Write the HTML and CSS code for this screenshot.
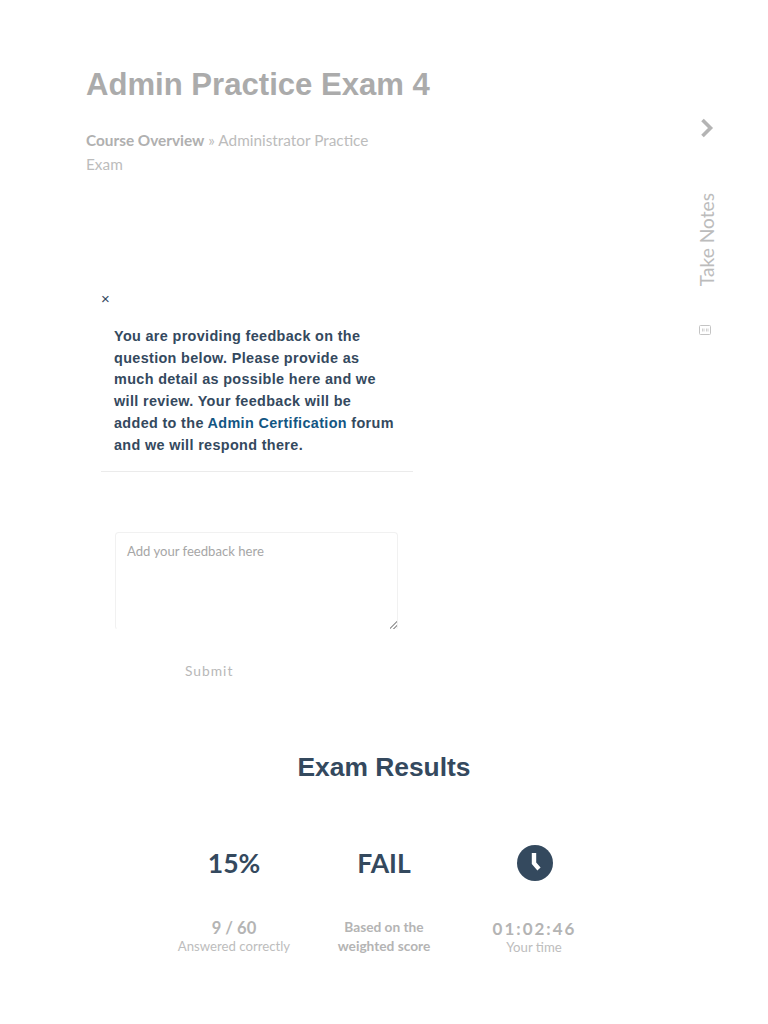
FILE: index.html
```html
<!DOCTYPE html>
<html lang="en">
<head>
<meta charset="utf-8">
<title>Admin Practice Exam 4</title>
<link rel="stylesheet" href="styles.css">
</head>
<body>
<div class="top">
  <main class="intro">
    <h1 class="title">Admin Practice Exam 4</h1>
    <p class="crumbs"><a class="crumb-link">Course Overview</a> » Administrator Practice Exam</p>
    <section class="feedback">
      <div class="close">×</div>
      <p class="notice">You are providing feedback on the question below. Please provide as much detail as possible here and we will review. Your feedback will be added to the <a class="forum">Admin Certification</a> forum and we will respond there.</p>
      <hr class="rule">
      <textarea class="area" placeholder="Add your feedback here"></textarea>
      <div class="submit">Submit</div>
    </section>
  </main>
  <aside class="side">
    <svg class="chevron" viewBox="0 0 14 20" width="14" height="20"><path d="M2.5 2 10.5 10 2.5 18" fill="none" stroke="#b4b4b4" stroke-width="3.6"/></svg>
    <div class="notes">Take Notes</div>
    <svg class="note-icon" viewBox="0 0 12 10" width="12" height="10"><rect x=".5" y=".5" width="11" height="9" rx="1" fill="none" stroke="#c4c4c4"/><path d="M3.5 3.5v3M5 3.5v3M7.5 3.5v3M9 3.5v3" stroke="#c4c4c4" stroke-width=".8"/></svg>
  </aside>
</div>
<section class="results">
  <h2 class="results-title">Exam Results</h2>
  <div class="stats">
    <div class="stat">
      <div class="big">15%</div>
      <div class="strong spaced">9 / 60</div>
      <div class="label">Answered correctly</div>
    </div>
    <div class="stat">
      <div class="big">FAIL</div>
      <div class="strong small">Based on the<br>weighted score</div>
    </div>
    <div class="stat">
      <div class="big"><svg class="clock" viewBox="0 0 36 36" width="36" height="36"><circle cx="18" cy="18" r="18" fill="#34495e"/><path d="M14.8 8h4.4v9.6l4.4 5-3.2 2.8-5.6-6.4z" fill="#fff"/></svg></div>
      <div class="strong time">01:02:46</div>
      <div class="label">Your time</div>
    </div>
  </div>
</section>
</body>
</html>
```
FILE: styles.css
```css
* { box-sizing: border-box; }
html, body { margin: 0; padding: 0; background: #fff; }
body { font-family: Lato, sans-serif; color: #34495e; height: 1024px; overflow: hidden; }
.top { display: flex; justify-content: space-between; height: 708px; }
.intro { width: 344px; margin-left: 86px; padding-top: 65px; }
.title { margin: 0; width: 360px; white-space: nowrap; font: 700 31.1px/40px "Liberation Sans", sans-serif; color: #ababab; }
.crumbs { margin: 23px 0 0; width: 300px; font-size: 15.35px; line-height: 24px; color: #bcbcbc; }
.crumb-link { font-weight: 700; color: #b0b0b0; }
.feedback { margin: 114px 0 0 15px; width: 312px; }
.close { font: 400 15px/18px "Liberation Sans", sans-serif; height: 18px; color: #34495e; }
.notice { margin: 18px 0 0 13px; width: 283px; font: 700 14.4px/21.7px "Liberation Sans", sans-serif; letter-spacing: .35px; color: #34495e; }
.forum { color: #135683; }
.rule { margin: 15px 0 0; border: 0; border-top: 1px solid #ebebeb; }
.area { display: block; width: 283px; height: 98px; margin: 60px 0 0 14px; padding: 9px 11px; border: 1px solid #f1f1f1; border-bottom-color: transparent; border-radius: 4px; font: 400 13.1px/18px Lato, sans-serif; outline: 0; background: #fff; }
.area::placeholder { color: #a6a6a6; opacity: 1; }
.area::-webkit-resizer { background: linear-gradient(135deg, transparent 50%, #a8a8a8 50%, #a8a8a8 60%, transparent 60%, transparent 74%, #a8a8a8 74%, #a8a8a8 84%, transparent 84%) no-repeat right bottom / 8px 8px; }
.submit { margin: 31px 0 0 84px; font-size: 13.8px; line-height: 20px; letter-spacing: 1px; color: #b8b8b8; }
.side { display: flex; flex-direction: column; align-items: center; width: 60px; margin-right: 31px; padding-top: 118px; }
.chevron { display: block; }
.notes { margin-top: 55px; writing-mode: vertical-rl; transform: rotate(180deg); font-size: 19.2px; line-height: 24px; color: #bcbcbc; }
.note-icon { margin: 39px 4px 0 0; }
.results { text-align: center; }
.results-title { margin: 0; padding-top: 42px; font: 700 26.4px/34px "Liberation Sans", sans-serif; color: #34495e; }
.stats { display: flex; justify-content: center; margin-top: 60px; }
.stat { width: 150px; }
.big { height: 38px; font-size: 26.5px; font-weight: 700; line-height: 38px; color: #34495e; }
.clock { display: block; margin: 1px auto 0 auto; transform: translateX(1px); }
.strong { margin-top: 35px; font-weight: 700; color: #b4b4b4; }
.spaced { font-size: 16.5px; line-height: 22px; }
.time { font-size: 17px; line-height: 22px; letter-spacing: 2px; padding-left: 1px; }
.small { font-size: 13.7px; line-height: 19px; }
.label { font-size: 13.2px; line-height: 15px; color: #bdbdbd; }
```
